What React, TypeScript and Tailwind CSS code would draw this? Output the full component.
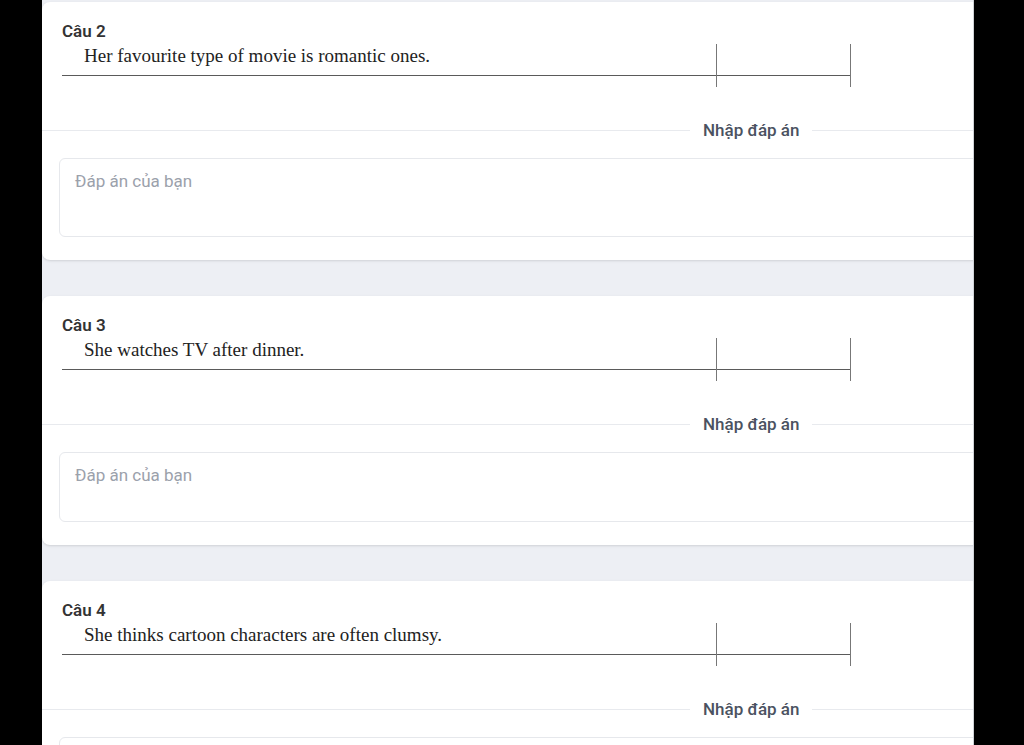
type Question = {
  label: string;
  sentence: string;
  answerHeight: string;
};

const questions: Question[] = [
  {
    label: "Câu 2",
    sentence: "Her favourite type of movie is romantic ones.",
    answerHeight: "h-[79px]",
  },
  {
    label: "Câu 3",
    sentence: "She watches TV after dinner.",
    answerHeight: "h-[70px]",
  },
  {
    label: "Câu 4",
    sentence: "She thinks cartoon characters are often clumsy.",
    answerHeight: "h-[70px]",
  },
];

function SentenceRow({ sentence }: { sentence: string }) {
  return (
    <div className="flex pl-[20px] mt-[3px]">
      <div className="w-[654px]">
        <div className="h-[32px] border-b border-[#5a5a5a] pl-[22px] pt-[1px]">
          <span
            className="text-[19px] leading-[22px] text-[#222]"
            style={{ fontFamily: '"Liberation Serif", "Times New Roman", serif' }}
          >
            {sentence}
          </span>
        </div>
      </div>
      <div className="w-[135px] h-[43px] border-x border-[#777]">
        <div className="h-[32px] border-b border-[#5a5a5a]" />
      </div>
    </div>
  );
}

function AnswerDivider() {
  return (
    <div className="flex items-center mt-[33px] h-[20px]">
      <div className="w-[648px] h-px bg-[#e8eaee]" />
      <span className="px-[13px] text-[17px] leading-[20px] font-medium text-[#4b5261]">
        Nhập đáp án
      </span>
      <div className="flex-1 h-px bg-[#e8eaee]" />
    </div>
  );
}

function QuestionCard({ q }: { q: Question }) {
  return (
    <div className="bg-white rounded-lg shadow-sm pt-[19px] pb-[23px] w-[1120px]">
      <div className="pl-[20px] text-[17px] leading-[20px] font-semibold text-[#333]">
        {q.label}
      </div>
      <SentenceRow sentence={q.sentence} />
      <AnswerDivider />
      <div
        className={`mx-[17px] mt-[18px] ${q.answerHeight} border border-[#e6e8ec] rounded-md px-[15px] pt-[11px]`}
      >
        <span className="text-[17px] leading-[20px] text-[#9ba1ab]">Đáp án của bạn</span>
      </div>
    </div>
  );
}

export default function App() {
  return (
    <div
      className="w-[1024px] h-[745px] bg-black flex overflow-hidden"
      style={{ fontFamily: 'Roboto, "Noto Sans", sans-serif' }}
    >
      <div className="w-[42px] shrink-0" />
      <main className="w-[932px] h-full bg-[#edeff4] overflow-hidden border-r border-[#cfd2d6]">
        <div className="flex flex-col gap-[36px] pt-[2px]">
          {questions.map((q) => (
            <QuestionCard key={q.label} q={q} />
          ))}
        </div>
      </main>
    </div>
  );
}
